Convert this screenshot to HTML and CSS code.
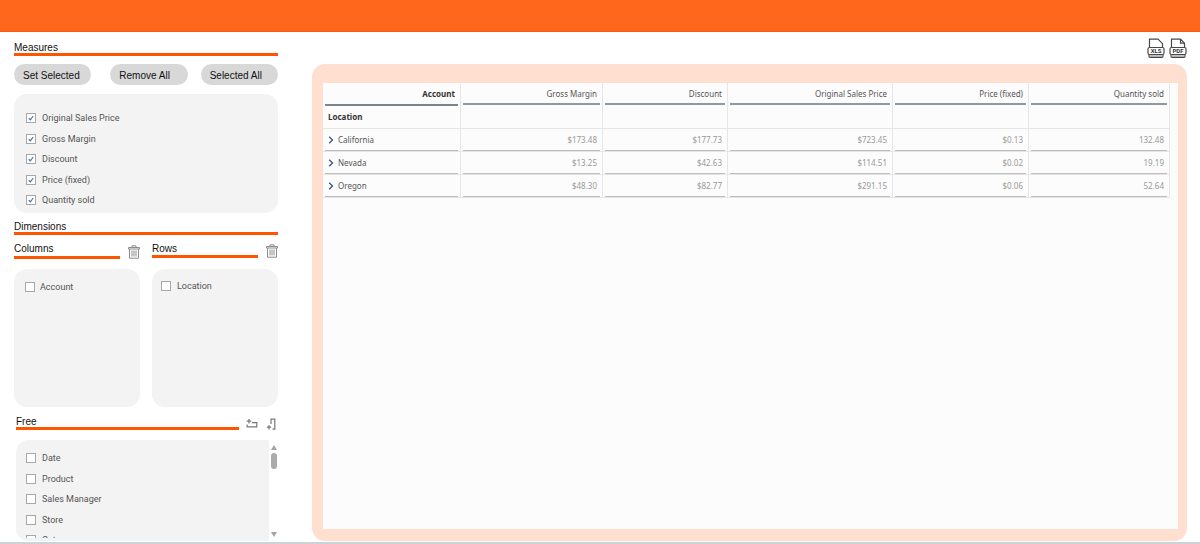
FILE: index.html
```html
<!DOCTYPE html>
<html lang="en">
<head>
<meta charset="utf-8">
<title>Sales analysis</title>
<link rel="stylesheet" href="styles.css">
</head>
<body>
<svg class="symbols" aria-hidden="true">
  <symbol id="trash" viewBox="0 0 12 14">
    <g fill="none" stroke="#8c8c8c" stroke-width="1"><path d="M0.500 2.500H11.500V4H0.500ZM4 2.500V0.800H8V2.500M1.500 4V13.200H10.500V4M4 5.500V11.500M6 5.500V11.500M8 5.500V11.500"/></g>
  </symbol>
  <symbol id="chevron" viewBox="0 0 6 8">
    <path d="M1.200 0.800L4.500 4L1.200 7.200" fill="none" stroke="#34597f" stroke-width="1.300"/>
  </symbol>
</svg>
<header class="banner"></header>
<div class="workspace">
  <aside class="sidebar">
    <section class="measures">
      <h2 class="heading">Measures</h2>
      <div class="actions">
        <button class="pill" type="button">Set Selected</button>
        <button class="pill pill-second" type="button">Remove All</button>
        <button class="pill" type="button">Selected All</button>
      </div>
      <div class="card measure-card">
        <label class="option"><input class="check" type="checkbox" checked>Original Sales Price</label>
        <label class="option"><input class="check" type="checkbox" checked>Gross Margin</label>
        <label class="option"><input class="check" type="checkbox" checked>Discount</label>
        <label class="option"><input class="check" type="checkbox" checked>Price (fixed)</label>
        <label class="option"><input class="check" type="checkbox" checked>Quantity sold</label>
      </div>
    </section>
    <section class="dimensions">
      <h2 class="heading">Dimensions</h2>
      <div class="axes">
        <div class="axis">
          <div class="axis-head axis-head-low">
            <h3 class="heading">Columns</h3>
            <button class="icon-button" type="button" aria-label="Clear columns"><svg class="trash-icon"><use href="#trash"/></svg></button>
          </div>
          <div class="card axis-card axis-card-low"><label class="option"><input class="check" type="checkbox">Account</label></div>
        </div>
        <div class="axis">
          <div class="axis-head">
            <h3 class="heading">Rows</h3>
            <button class="icon-button" type="button" aria-label="Clear rows"><svg class="trash-icon"><use href="#trash"/></svg></button>
          </div>
          <div class="card axis-card"><label class="option"><input class="check" type="checkbox">Location</label></div>
        </div>
      </div>
    </section>
    <section class="free">
      <div class="free-head">
        <h2 class="heading">Free</h2>
        <div class="free-tools">
          <button class="icon-button" type="button" aria-label="Add to rows">
            <svg class="move-icon" viewBox="0 0 12 12" fill="none" stroke="#777" stroke-width="1.200"><path d="M3 1V5.500M0.800 3.200H5.200M6 4.600H10.800V8.900M1.100 6.500V8.900H11.300" /></svg>
          </button>
          <button class="icon-button" type="button" aria-label="Add to columns">
            <svg class="move-icon" viewBox="0 0 12 12" fill="none" stroke="#777" stroke-width="1.200"><path d="M3 7V11.500M0.800 9.200H5.200M5 5.800V1.200H8.800V11.200H6.500M5 1.200V6"/></svg>
          </button>
        </div>
      </div>
      <div class="free-list">
        <div class="free-viewport">
          <div class="free-options">
            <label class="option"><input class="check" type="checkbox">Date</label>
            <label class="option"><input class="check" type="checkbox">Product</label>
            <label class="option"><input class="check" type="checkbox">Sales Manager</label>
            <label class="option"><input class="check" type="checkbox">Store</label>
            <label class="option"><input class="check" type="checkbox">Category</label>
          </div>
        </div>
        <div class="scrollbar" aria-hidden="true">
          <span class="arrow arrow-up"></span>
          <span class="thumb"></span>
          <span class="arrow arrow-down"></span>
        </div>
      </div>
    </section>
  </aside>
  <main class="report">
    <div class="exports">
      <button class="icon-button" type="button" aria-label="Export to XLS">
        <svg class="file-icon" viewBox="0 0 18 21" fill="none" stroke="#484848" stroke-width="1.200"><path d="M2.500 9.500V1.200H11L15.500 5.700V9.500M2 16.500V18.200Q2 19.400 3.200 19.400H14.800Q16 19.400 16 18.200V16.500"/><path d="M3 18H15" stroke="#999"/><rect x="1" y="9.500" width="16" height="7" rx="1.500"/><text class="file-type" x="9" y="15">XLS</text></svg>
      </button>
      <button class="icon-button" type="button" aria-label="Export to PDF">
        <svg class="file-icon" viewBox="0 0 18 21" fill="none" stroke="#484848" stroke-width="1.200"><path d="M2.500 9.500V1.200H11.500L15.500 5.200V9.500M11.500 1.200V5.200H15.500M2 16.500V18.200Q2 19.400 3.200 19.400H14.800Q16 19.400 16 18.200V16.500"/><path d="M3 18H15" stroke="#999"/><rect x="1" y="9.500" width="16" height="7" rx="1.500"/><text class="file-type" x="9" y="15">PDF</text></svg>
      </button>
    </div>
    <div class="frame">
      <div class="sheet">
        <table class="grid">
          <colgroup><col class="col-name"><col class="col-margin"><col class="col-discount"><col class="col-original"><col class="col-fixed"><col class="col-quantity"></colgroup>
          <thead>
            <tr class="head-row"><th class="account" scope="col"><div class="cell">Account</div></th><th scope="col"><div class="cell">Gross Margin</div></th><th scope="col"><div class="cell">Discount</div></th><th scope="col"><div class="cell">Original Sales Price</div></th><th scope="col"><div class="cell">Price (fixed)</div></th><th scope="col"><div class="cell">Quantity sold</div></th></tr>
          </thead>
          <tbody>
            <tr class="group-row"><th scope="row"><div class="cell">Location</div></th><td></td><td></td><td></td><td></td><td></td></tr>
            <tr class="data-row"><th scope="row"><div class="cell"><svg class="chevron"><use href="#chevron"/></svg>California</div></th><td><div class="cell">$173.48</div></td><td><div class="cell">$177.73</div></td><td><div class="cell">$723.45</div></td><td><div class="cell">$0.13</div></td><td><div class="cell">132.48</div></td></tr>
            <tr class="data-row"><th scope="row"><div class="cell"><svg class="chevron"><use href="#chevron"/></svg>Nevada</div></th><td><div class="cell">$13.25</div></td><td><div class="cell">$42.63</div></td><td><div class="cell">$114.51</div></td><td><div class="cell">$0.02</div></td><td><div class="cell">19.19</div></td></tr>
            <tr class="data-row"><th scope="row"><div class="cell"><svg class="chevron"><use href="#chevron"/></svg>Oregon</div></th><td><div class="cell">$48.30</div></td><td><div class="cell">$82.77</div></td><td><div class="cell">$291.15</div></td><td><div class="cell">$0.06</div></td><td><div class="cell">52.64</div></td></tr>
          </tbody>
        </table>
      </div>
    </div>
  </main>
</div>
</body>
</html>
```
FILE: styles.css
```css
* { box-sizing: border-box; }

body {
  margin: 0;
  min-height: 100vh;
  display: flex;
  flex-direction: column;
  background: #fff;
  color: #555;
  font: 8px/12px "Noto Sans", "Open Sans", sans-serif;
  border-bottom: 2px solid #ccd2d6;
}

.symbols { display: none; }

.banner {
  height: 32px;
  background: #ff671d;
  border-bottom: 1px solid #ff5a0a;
}

.workspace {
  flex: 1;
  display: flex;
  gap: 34px;
  padding: 0 13px 0 14px;
}

.sidebar {
  flex: none;
  width: 264px;
  padding-top: 9px;
  display: flex;
  flex-direction: column;
}

.heading {
  margin: 0;
  padding-top: 2px;
  color: #111;
  font: 400 10px/10px "Liberation Sans", Arial, sans-serif;
  border-bottom: 3px solid #ff5500;
}

.actions {
  display: flex;
  gap: 13px;
  margin-top: 8px;
}

.pill {
  flex: 1;
  height: 21px;
  padding: 3px 0 0 9px;
  border: 0;
  border-radius: 11px;
  background: #d8d8d8;
  color: #111;
  font: 10px/12px "Liberation Sans", Arial, sans-serif;
  text-align: left;
}

.pill-second { margin-left: 6px; }

.card {
  border-radius: 13px;
  background: #f3f3f3;
}

.measure-card {
  height: 119px;
  margin-top: 9px;
  padding: 18px 12px 7px;
  display: flex;
  flex-direction: column;
  justify-content: space-between;
}

.option {
  display: flex;
  align-items: center;
  gap: 6px;
  font: 9px/12px Roboto, sans-serif;
}

.check {
  appearance: none;
  flex: none;
  width: 10px;
  height: 10px;
  margin: 0;
  border: 1px solid #a8a8a8;
  background: #fff;
}

.check:checked {
  background: #fff url("data:image/svg+xml,%3Csvg xmlns='http://www.w3.org/2000/svg' viewBox='0 0 8 8'%3E%3Cpath d='M1.700 4.200L3.400 5.800L6.200 2' fill='none' stroke='%23427cac' stroke-width='1.200'/%3E%3C/svg%3E");
}

.dimensions { margin-top: 7px; }

.axes {
  display: grid;
  grid-template-columns: 1fr 1fr;
  gap: 12px;
}

.axis-head {
  display: grid;
  grid-template-columns: 1fr 12px;
  gap: 8px;
  align-items: start;
  height: 34px;
  padding-top: 7px;
}

.axis-head .icon-button { padding-top: 2px; }

.axis-head .heading { padding-bottom: 1px; }

.axis-head-low .heading { padding-bottom: 2px; }
.axis-head-low .icon-button { padding-top: 3px; }

.axis-card {
  height: 138px;
  padding: 11px 9px;
}

.axis-card-low { padding: 12px 11px; }
.axis-card-low .option { gap: 5px; }

.icon-button {
  display: block;
  padding: 0;
  border: 0;
  background: none;
}

.icon-button svg { display: block; }

.trash-icon { width: 12px; height: 14px; }

.free {
  flex: 1;
  display: flex;
  flex-direction: column;
  margin: 8px 0 0 2px;
}

.free-head {
  display: flex;
  align-items: flex-end;
  gap: 7px;
}

.free-head .heading { flex: 1; }

.free-tools {
  display: flex;
  gap: 8px;
}

.move-icon { width: 12px; height: 12px; }

.free-list {
  height: 101px;
  margin-top: 10px;
  display: flex;
  overflow: hidden;
  border-radius: 13px;
  background: #f3f3f3;
}

.free-viewport {
  flex: 1;
  height: 98px;
  overflow: hidden;
}

.free-options {
  height: 106px;
  padding: 12px 10px 0;
  display: flex;
  flex-direction: column;
  justify-content: space-between;
}

.scrollbar {
  width: 9px;
  padding: 5px 0 4px;
  display: flex;
  flex-direction: column;
  align-items: center;
  background: #fff;
}

.arrow {
  border: 3px solid transparent;
  border-top-width: 0;
  border-bottom: 5px solid #a3a3a3;
}

.arrow-down {
  margin-top: auto;
  border-top: 5px solid #a3a3a3;
  border-bottom-width: 0;
}

.thumb {
  width: 6px;
  height: 16px;
  margin-top: 3px;
  border-radius: 3px;
  background: #ababab;
}

.report {
  flex: 1;
  min-width: 0;
  display: flex;
  flex-direction: column;
}

.exports {
  display: flex;
  justify-content: flex-end;
  gap: 4px;
  padding-top: 6px;
}

.file-icon { width: 18px; height: 21px; }

.file-type {
  fill: #333;
  stroke: none;
  font: 700 6px Roboto, sans-serif;
  text-anchor: middle;
}

.frame {
  flex: 1;
  display: flex;
  margin: 5px 0 1px;
  padding: 19px 9px 12px 11px;
  border-radius: 13px;
  background: #ffdfcf;
}

.sheet {
  flex: 1;
  padding-right: 8px;
  background: #fcfcfc;
}

.grid {
  width: 100%;
  table-layout: fixed;
  border-collapse: separate;
  border-spacing: 0;
}

.col-name { width: 138px; }
.col-margin { width: 142px; }
.col-discount { width: 125px; }
.col-original { width: 165px; }
.col-fixed { width: 136px; }
.col-quantity { width: 141px; }

.grid th,
.grid td {
  height: 23px;
  padding: 0 2px;
  border-right: 1px solid #e6e6e6;
  border-bottom: 1px solid #e6e6e6;
  font-weight: 400;
  text-align: right;
  vertical-align: top;
}

.cell {
  height: 22px;
  padding: 5px 3px 0;
}

.grid .head-row th { border-bottom: 0; }
.head-row .cell { border-bottom: 2px solid #909aa6; }
.head-row .account .cell {
  height: 23px;
  border-bottom-color: #7b8592;
}

.grid .account,
.grid .group-row th {
  color: #333;
  font-weight: 700;
}

.grid .group-row th,
.grid .data-row th { text-align: left; }

.data-row .cell { border-bottom: 1px solid #bdbdbd; }
.data-row td { color: #999; }

.chevron {
  width: 6px;
  height: 8px;
  margin-right: 4px;
  vertical-align: -1px;
}
```
